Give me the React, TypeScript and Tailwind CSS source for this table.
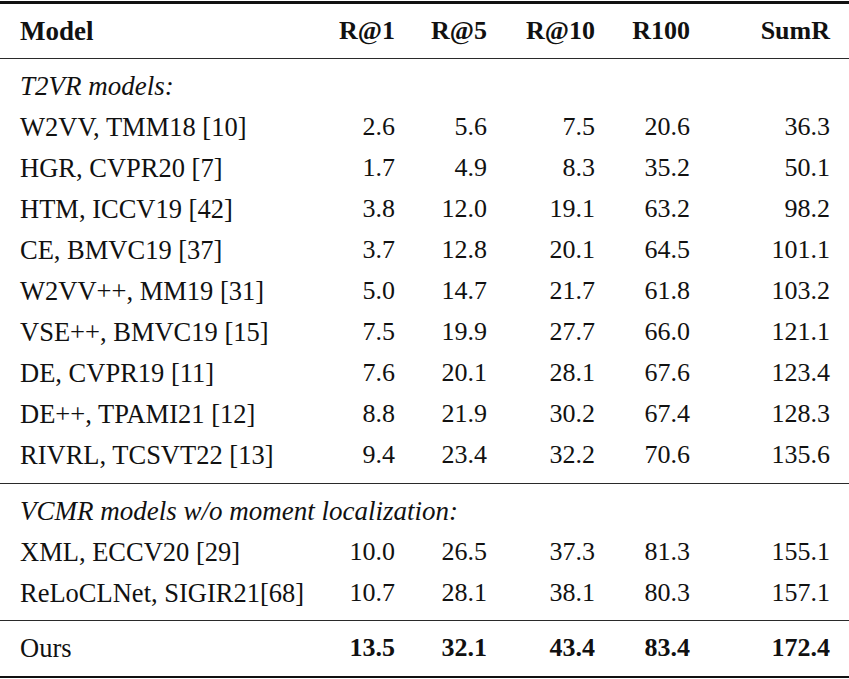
const cols = "grid grid-cols-[310px_65px_92px_108px_95px_140px] h-[41px] items-center";

type Row = { name: string; vals: string[] };

const t2vr: Row[] = [
  { name: "W2VV, TMM18 [10]", vals: ["2.6", "5.6", "7.5", "20.6", "36.3"] },
  { name: "HGR, CVPR20 [7]", vals: ["1.7", "4.9", "8.3", "35.2", "50.1"] },
  { name: "HTM, ICCV19 [42]", vals: ["3.8", "12.0", "19.1", "63.2", "98.2"] },
  { name: "CE, BMVC19 [37]", vals: ["3.7", "12.8", "20.1", "64.5", "101.1"] },
  { name: "W2VV++, MM19 [31]", vals: ["5.0", "14.7", "21.7", "61.8", "103.2"] },
  { name: "VSE++, BMVC19 [15]", vals: ["7.5", "19.9", "27.7", "66.0", "121.1"] },
  { name: "DE, CVPR19 [11]", vals: ["7.6", "20.1", "28.1", "67.6", "123.4"] },
  { name: "DE++, TPAMI21 [12]", vals: ["8.8", "21.9", "30.2", "67.4", "128.3"] },
  { name: "RIVRL, TCSVT22 [13]", vals: ["9.4", "23.4", "32.2", "70.6", "135.6"] },
];

const vcmr: Row[] = [
  { name: "XML, ECCV20 [29]", vals: ["10.0", "26.5", "37.3", "81.3", "155.1"] },
  { name: "ReLoCLNet, SIGIR21[68]", vals: ["10.7", "28.1", "38.1", "80.3", "157.1"] },
];

const DataRow = ({ row, bold }: { row: Row; bold?: boolean }) => (
  <div className={cols}>
    <div className="text-[26.5px]">{row.name}</div>
    {row.vals.map((v, i) => (
      <div key={i} className={bold ? "text-right font-bold" : "text-right"}>
        {v}
      </div>
    ))}
  </div>
);

const Rule = () => <div className="h-px bg-[#2a2a2a]" />;

const App = () => {
  return (
    <div className="w-[849px] h-[679px] bg-white text-[#111] text-[26px] leading-none font-['Liberation_Serif','Times_New_Roman',serif]">
      <div className="h-[1px]" />
      <div className="h-[2.5px] bg-[#111]" />

      {/* header */}
      <div className="px-[20px] pt-[7px] pb-[6px] font-bold">
        <div className={cols}>
          <div className="text-[27px]">Model</div>
          <div className="text-right">R@1</div>
          <div className="text-right">R@5</div>
          <div className="text-right">R@10</div>
          <div className="text-right">R100</div>
          <div className="text-right">SumR</div>
        </div>
      </div>
      <Rule />

      {/* T2VR */}
      <div className="px-[20px] py-[7px]">
        <div className="h-[41px] flex items-center italic text-[27px]">T2VR models:</div>
        {t2vr.map((r) => (
          <DataRow key={r.name} row={r} />
        ))}
      </div>
      <Rule />

      {/* VCMR */}
      <div className="px-[20px] pt-[7px] pb-[6px]">
        <div className="h-[41px] flex items-center italic text-[27px]">VCMR models w/o moment localization:</div>
        {vcmr.map((r) => (
          <DataRow key={r.name} row={r} />
        ))}
      </div>
      <Rule />

      {/* ours */}
      <div className="px-[20px] py-[7px]">
        <DataRow row={{ name: "Ours", vals: ["13.5", "32.1", "43.4", "83.4", "172.4"] }} bold />
      </div>
      <div className="h-[2.5px] bg-[#111]" />
    </div>
  );
};

export default App;
